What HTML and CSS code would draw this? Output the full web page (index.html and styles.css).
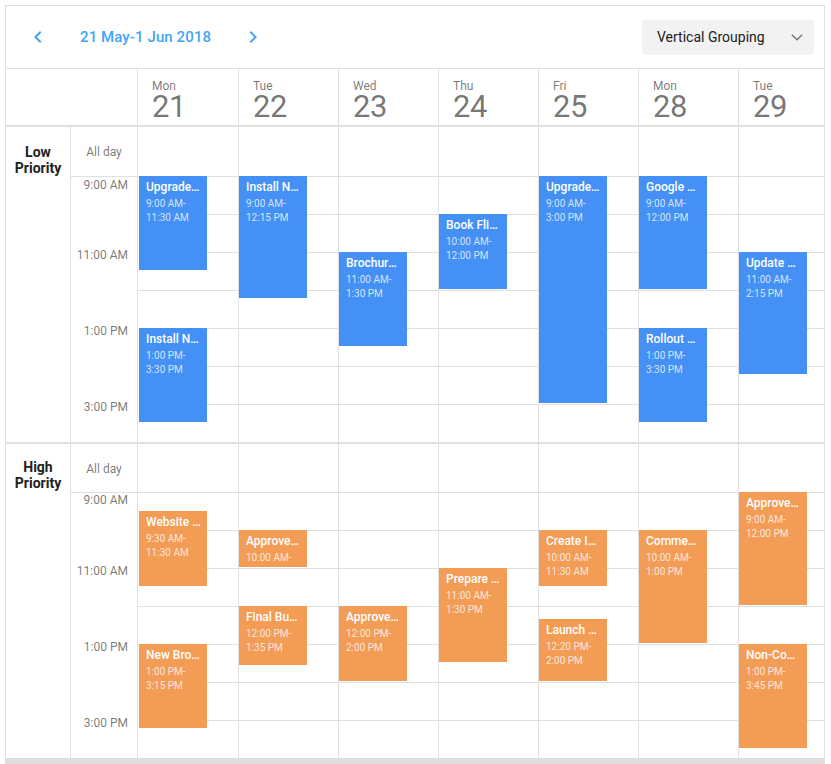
FILE: index.html
```html
<!DOCTYPE html>
<html lang="en">
<head>
<meta charset="utf-8">
<title>Scheduler – Vertical Grouping</title>
<link rel="stylesheet" href="styles.css">
</head>
<body>
<div class="scheduler">
  <div class="toolbar">
    <button class="nav-btn nav-prev" aria-label="Previous">
      <svg viewBox="0 0 24 24" width="24" height="24"><path d="M15.41 7.41L14 6l-6 6 6 6 1.41-1.41L10.83 12z"/></svg>
    </button>
    <div class="range-title">21 May-1 Jun 2018</div>
    <button class="nav-btn nav-next" aria-label="Next">
      <svg viewBox="0 0 24 24" width="24" height="24"><path d="M10 6L8.59 7.41 13.17 12l-4.58 4.59L10 18l6-6z"/></svg>
    </button>
    <div class="spacer"></div>
    <div class="select">
      <span>Vertical Grouping</span>
      <svg class="select-arrow" viewBox="0 0 12 7" width="12" height="7"><polyline points="0.8,0.8 6,5.8 11.2,0.8"/></svg>
    </div>
  </div>

  <div class="grid head-row">
    <div class="corner"></div>
    <div class="day-head"><div class="dow">Mon</div><div class="dom">21</div></div>
    <div class="day-head"><div class="dow">Tue</div><div class="dom">22</div></div>
    <div class="day-head"><div class="dow">Wed</div><div class="dom">23</div></div>
    <div class="day-head"><div class="dow">Thu</div><div class="dom">24</div></div>
    <div class="day-head"><div class="dow">Fri</div><div class="dom">25</div></div>
    <div class="day-head"><div class="dow">Mon</div><div class="dom">28</div></div>
    <div class="day-head"><div class="dow">Tue</div><div class="dom">29</div></div>
  </div>

  <!-- Low priority -->
  <div class="grid group group-low">
    <div class="group-cell">Low Priority</div>
    <div class="time-col">
      <div class="allday-label">All day</div>
      <div class="time-labels">
        <div class="time-label">9:00 AM</div>
        <div class="time-label">11:00 AM</div>
        <div class="time-label">1:00 PM</div>
        <div class="time-label">3:00 PM</div>
      </div>
    </div>
    <div class="day-col day-first">
      <div class="allday"></div>
      <div class="slots">
        <div class="appt low" style="top:-1px;height:94px"><div class="appt-title">Upgrade Personal Computers</div><div class="appt-time">9:00 AM-</div><div class="appt-time">11:30 AM</div></div>
        <div class="appt low" style="top:151px;height:94px"><div class="appt-title">Install New Database</div><div class="appt-time">1:00 PM-</div><div class="appt-time">3:30 PM</div></div>
      </div>
    </div>
    <div class="day-col">
      <div class="allday"></div>
      <div class="slots">
        <div class="appt low" style="top:-1px;height:122px"><div class="appt-title">Install New Router in Dev Room</div><div class="appt-time">9:00 AM-</div><div class="appt-time">12:15 PM</div></div>
      </div>
    </div>
    <div class="day-col">
      <div class="allday"></div>
      <div class="slots">
        <div class="appt low" style="top:75px;height:94px"><div class="appt-title">Brochure Design Review</div><div class="appt-time">11:00 AM-</div><div class="appt-time">1:30 PM</div></div>
      </div>
    </div>
    <div class="day-col">
      <div class="allday"></div>
      <div class="slots">
        <div class="appt low" style="top:37px;height:75px"><div class="appt-title">Book Flights to San Fran</div><div class="appt-time">10:00 AM-</div><div class="appt-time">12:00 PM</div></div>
      </div>
    </div>
    <div class="day-col">
      <div class="allday"></div>
      <div class="slots">
        <div class="appt low" style="top:-1px;height:227px"><div class="appt-title">Upgrade Server Hardware</div><div class="appt-time">9:00 AM-</div><div class="appt-time">3:00 PM</div></div>
      </div>
    </div>
    <div class="day-col">
      <div class="allday"></div>
      <div class="slots">
        <div class="appt low" style="top:-1px;height:113px"><div class="appt-title">Google AdWords Strategy</div><div class="appt-time">9:00 AM-</div><div class="appt-time">12:00 PM</div></div>
        <div class="appt low" style="top:151px;height:94px"><div class="appt-title">Rollout of New Website</div><div class="appt-time">1:00 PM-</div><div class="appt-time">3:30 PM</div></div>
      </div>
    </div>
    <div class="day-col">
      <div class="allday"></div>
      <div class="slots">
        <div class="appt low" style="top:75px;height:122px"><div class="appt-title">Update NDA Agreement</div><div class="appt-time">11:00 AM-</div><div class="appt-time">2:15 PM</div></div>
      </div>
    </div>
  </div>

  <!-- High priority -->
  <div class="grid group group-high">
    <div class="group-cell">High Priority</div>
    <div class="time-col">
      <div class="allday-label">All day</div>
      <div class="time-labels">
        <div class="time-label">9:00 AM</div>
        <div class="time-label">11:00 AM</div>
        <div class="time-label">1:00 PM</div>
        <div class="time-label">3:00 PM</div>
      </div>
    </div>
    <div class="day-col day-first">
      <div class="allday"></div>
      <div class="slots">
        <div class="appt high" style="top:18px;height:75px"><div class="appt-title">Website Re-Design Plan</div><div class="appt-time">9:30 AM-</div><div class="appt-time">11:30 AM</div></div>
        <div class="appt high" style="top:151px;height:84px"><div class="appt-title">New Brochures</div><div class="appt-time">1:00 PM-</div><div class="appt-time">3:15 PM</div></div>
      </div>
    </div>
    <div class="day-col">
      <div class="allday"></div>
      <div class="slots">
        <div class="appt high" style="top:37px;height:37px"><div class="appt-title">Approve Personal Computer Upgrade Plan</div><div class="appt-time">10:00 AM-</div></div>
        <div class="appt high" style="top:113px;height:59px"><div class="appt-title">Final Budget Review</div><div class="appt-time">12:00 PM-</div><div class="appt-time">1:35 PM</div></div>
      </div>
    </div>
    <div class="day-col">
      <div class="allday"></div>
      <div class="slots">
        <div class="appt high" style="top:113px;height:75px"><div class="appt-title">Approve New Online Marketing Strategy</div><div class="appt-time">12:00 PM-</div><div class="appt-time">2:00 PM</div></div>
      </div>
    </div>
    <div class="day-col">
      <div class="allday"></div>
      <div class="slots">
        <div class="appt high" style="top:75px;height:94px"><div class="appt-title">Prepare 2015 Marketing Plan</div><div class="appt-time">11:00 AM-</div><div class="appt-time">1:30 PM</div></div>
      </div>
    </div>
    <div class="day-col">
      <div class="allday"></div>
      <div class="slots">
        <div class="appt high" style="top:37px;height:56px"><div class="appt-title">Create Icons for Website</div><div class="appt-time">10:00 AM-</div><div class="appt-time">11:30 AM</div></div>
        <div class="appt high" style="top:126px;height:62px"><div class="appt-title">Launch New Website</div><div class="appt-time">12:20 PM-</div><div class="appt-time">2:00 PM</div></div>
      </div>
    </div>
    <div class="day-col">
      <div class="allday"></div>
      <div class="slots">
        <div class="appt high" style="top:37px;height:113px"><div class="appt-title">Comment on Revenue Projections</div><div class="appt-time">10:00 AM-</div><div class="appt-time">1:00 PM</div></div>
      </div>
    </div>
    <div class="day-col">
      <div class="allday"></div>
      <div class="slots">
        <div class="appt high" style="top:-1px;height:113px"><div class="appt-title">Approve Hiring of John Jeffers</div><div class="appt-time">9:00 AM-</div><div class="appt-time">12:00 PM</div></div>
        <div class="appt high" style="top:151px;height:104px"><div class="appt-title">Non-Compete Agreements</div><div class="appt-time">1:00 PM-</div><div class="appt-time">3:45 PM</div></div>
      </div>
    </div>
  </div>

  <div class="hscroll"></div>
</div>
</body>
</html>
```

FILE: styles.css
```css
* { box-sizing: border-box; }

html, body {
  margin: 0;
  padding: 0;
  background: #fff;
  overflow: hidden;
}

body {
  font-family: Roboto, "Liberation Sans", Arial, sans-serif;
  color: rgba(0, 0, 0, 0.87);
}

.scheduler {
  margin: 5px 0 0 5px;
  width: 820px;
  border: 1px solid #e0e0e0;
  border-bottom: none;
}

/* Toolbar */
.toolbar {
  height: 63px;
  border-bottom: 1px solid #e0e0e0;
  display: flex;
  align-items: center;
  padding: 0 10px 1px 14px;
}

.nav-btn {
  width: 36px;
  height: 36px;
  border: none;
  background: transparent;
  padding: 0;
  display: flex;
  align-items: center;
  justify-content: center;
  cursor: pointer;
}

.nav-btn svg { fill: #42a5f5; }

.range-title {
  margin-left: 24px;
  font-size: 15px;
  font-weight: 500;
  color: #42a5f5;
  letter-spacing: 0.1px;
  line-height: 20px;
}

.nav-next { margin-left: 24px; }

.spacer { flex: 1; }

.select {
  width: 172px;
  height: 35px;
  background: #f2f2f2;
  border-radius: 4px;
  display: flex;
  align-items: center;
  justify-content: space-between;
  padding: 0 11px 0 15px;
  font-size: 14px;
  color: #212121;
  margin-top: 1px;
}

.select-arrow {
  fill: none;
  stroke: #757575;
  stroke-width: 1.4;
}

/* Grid columns */
.grid {
  display: grid;
  grid-template-columns: 65px 67px 101px 100px 100px 100px 100px 100px 85px;
}

.head-row {
  height: 58px;
  border-bottom: 2px solid #e0e0e0;
  grid-template-columns: 132px 101px 100px 100px 100px 100px 100px 85px;
}

.corner { border-right: 1px solid #e0e0e0; }

.day-head {
  border-right: 1px solid #e0e0e0;
  padding: 10px 0 0 14px;
  color: rgba(0, 0, 0, 0.54);
}
.day-head:last-child { border-right: none; }

.dow {
  font-size: 12px;
  line-height: 14px;
}

.dom {
  font-size: 31px;
  line-height: 28px;
  letter-spacing: -0.3px;
}

/* Groups */
.group-low { border-bottom: 2px solid #e0e0e0; }

.group-cell {
  border-right: 1px solid #e0e0e0;
  text-align: center;
  font-weight: 700;
  font-size: 14px;
  line-height: 16px;
  padding: 17px 6px 0;
  color: #212121;
}
.group-high .group-cell { padding-top: 15px; }

.time-col {
  border-right: 1px solid #e0e0e0;
  color: rgba(0, 0, 0, 0.54);
  font-size: 12px;
}

.allday-label,
.allday {
  height: 50px;
  border-bottom: 1px solid #e0e0e0;
}
.group-high .allday-label,
.group-high .allday { height: 49px; }

.allday-label {
  display: flex;
  align-items: center;
  justify-content: center;
  padding-top: 1px;
}

.time-labels {
  display: flex;
  flex-direction: column;
  gap: 60px;
  align-items: flex-end;
  padding-right: 9px;
}

.time-label { line-height: 16px; }
.time-label:first-child { margin-bottom: -6px; }
.group-high .time-label:first-child { margin-top: -1px; margin-bottom: -5px; }

.day-col {
  border-right: 1px solid #e0e0e0;
  display: flex;
  flex-direction: column;
}
.day-col:last-child { border-right: none; }

.slots {
  position: relative;
  height: 265px;
  background: repeating-linear-gradient(to bottom, transparent 0, transparent 37px, #e0e0e0 37px, #e0e0e0 38px);
}

/* Appointments */
.appt {
  position: absolute;
  left: 0;
  width: 68px;
  overflow: hidden;
  color: #fff;
  padding: 3px 6px 0 7px;
}
.day-first .appt { left: 1px; }
.appt.low { background: #4490f5; }
.appt.high { background: #f29c56; }

.appt-title {
  font-size: 12px;
  font-weight: 500;
  line-height: 16px;
  white-space: nowrap;
  overflow: hidden;
  text-overflow: ellipsis;
  margin-bottom: 2px;
}

.appt-time {
  font-size: 10px;
  line-height: 14px;
  white-space: nowrap;
  color: rgba(255, 255, 255, 0.78);
}

.hscroll {
  height: 12px;
  background: #dedede;
}
```
